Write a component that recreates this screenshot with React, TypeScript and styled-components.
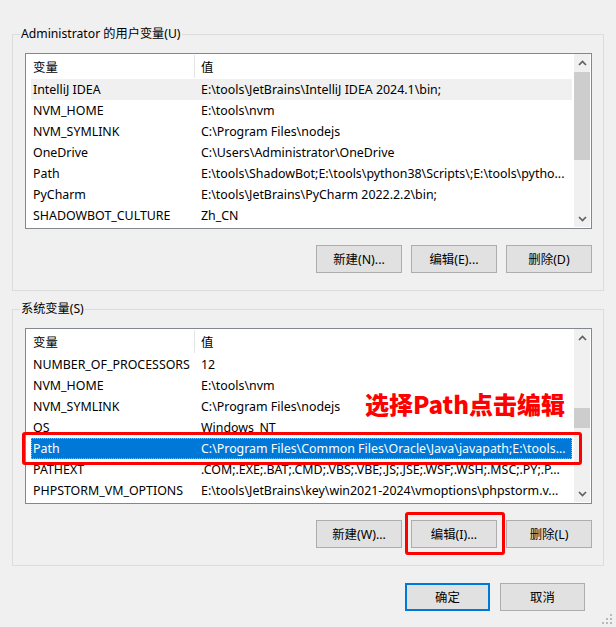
import React from 'react';
import styled, { createGlobalStyle, css } from 'styled-components';

const GlobalStyle = createGlobalStyle`
    html, body {
        margin: 0;
        padding: 0;
        background: #f0f0f0;
    }
    body {
        font-family: 'Noto Sans', 'Noto Sans CJK SC', sans-serif;
        font-size: 12px;
        color: #000;
    }
`;

const Window = styled.div`
    position: relative;
    width: 616px;
    height: 627px;
    box-sizing: border-box;
    padding: 26px 12px 0 12px;
    display: flex;
    flex-direction: column;
    overflow: hidden;
`;

const Group = styled.fieldset<{ $gap?: number }>`
    margin: ${(p) => p.$gap ?? 0}px 0 0 0;
    padding: 0;
    border: 1px solid #dcdcdc;
    min-width: 0;
`;

const Legend = styled.legend`
    margin-left: 7px;
    padding: 0 1px;
    line-height: 16px;
    font-size: 12.2px;
    color: #000;
`;

const GroupBody = styled.div`
    padding: 11px 11px 17px 12px;
    display: flex;
    flex-direction: column;
`;

const ListView = styled.div`
    position: relative;
    height: 176px;
    box-sizing: border-box;
    border: 1px solid #828790;
    background: #fff;
    display: flex;
    font-size: 12.4px;
`;

const ListContent = styled.div`
    flex: 1;
    padding-left: 5px;
    display: flex;
    flex-direction: column;
`;

const HeaderRow = styled.div`
    display: flex;
    height: 25px;
    align-items: center;
    margin-right: 1px;
`;

const HeaderCell = styled.div<{ $first?: boolean }>`
    height: 23px;
    display: flex;
    align-items: center;
    ${(p) =>
        p.$first
            ? css`
                  width: 164px;
                  box-sizing: border-box;
                  padding-left: 2px;
                  border-right: 1px solid #e5e5e5;
              `
            : css`
                  padding-left: 6px;
              `}
`;

type RowState = 'hover' | 'selected' | undefined;

const Row = styled.div<{ $state?: RowState; $marked?: boolean }>`
    position: relative;
    display: flex;
    align-items: center;
    height: 21px;
    margin-right: 1px;
    white-space: nowrap;
    ${(p) =>
        p.$state === 'hover' &&
        css`
            background: #f0f0f0;
        `}
    ${(p) =>
        p.$state === 'selected' &&
        css`
            background: #0078d7;
            color: #fff;
            outline: 1px dotted #f0a040;
            outline-offset: -1px;
        `}
    ${(p) =>
        p.$marked &&
        css`
            &::after {
                content: '';
                position: absolute;
                top: -6px;
                bottom: -6px;
                left: -9px;
                right: -10px;
                border: 3px solid #ff0000;
                border-radius: 3px;
                z-index: 3;
                pointer-events: none;
            }
        `}
`;

const NameCell = styled.div`
    width: 164px;
    box-sizing: border-box;
    padding-left: 2px;
    flex-shrink: 0;
`;

const ValueCell = styled.div`
    padding-left: 6px;
`;

const ScrollBar = styled.div`
    position: relative;
    width: 16px;
    margin: 0 1px 1px 1px;
    background: #f0f0f0;
    display: flex;
    flex-direction: column;
    justify-content: space-between;
`;

const ScrollArrow = styled.div`
    height: 17px;
    display: flex;
    align-items: center;
    justify-content: center;
`;

const Thumb = styled.div<{ $top: number; $height: number }>`
    position: absolute;
    left: 0;
    right: 0;
    top: ${(p) => p.$top}px;
    height: ${(p) => p.$height}px;
    background: #cdcdcd;
`;

const ButtonRow = styled.div<{ $pad?: number }>`
    display: flex;
    justify-content: flex-end;
    gap: 9px;
    margin-top: 16px;
    padding-right: ${(p) => p.$pad ?? 0}px;
`;

const Button = styled.button<{ $primary?: boolean; $marked?: boolean; $w?: number }>`
    position: relative;
    width: ${(p) => p.$w ?? 86}px;
    height: 28px;
    box-sizing: border-box;
    background: #e1e1e1;
    border: 1px solid #adadad;
    font-family: 'Noto Sans', 'Noto Sans CJK SC', sans-serif;
    font-size: 12.4px;
    color: #000;
    padding: 0;
    cursor: default;
    ${(p) =>
        p.$primary &&
        css`
            border: 2px solid #0078d7;
        `}
    ${(p) =>
        p.$marked &&
        css`
            &::after {
                content: '';
                position: absolute;
                top: -9px;
                bottom: -8px;
                left: -7px;
                right: -9px;
                border: 3px solid #ff0000;
                border-radius: 3px;
                pointer-events: none;
            }
        `}
`;

const Footer = styled.div`
    display: flex;
    justify-content: flex-end;
    gap: 10px;
    margin-top: 17px;
    padding-right: 19px;
`;

const Note = styled.div`
    position: absolute;
    left: 339px;
    top: 61px;
    font-family: 'Noto Sans CJK SC', sans-serif;
    font-size: 24px;
    line-height: 28px;
    font-weight: 900;
    color: #ff0000;
    white-space: nowrap;
    z-index: 4;
    text-shadow: 1px 0 #fff, -1px 0 #fff, 0 1px #fff, 0 -1px #fff;
`;

const Grip = styled.svg`
    position: absolute;
    right: 3px;
    bottom: 2px;
`;

const Chevron: React.FC<{ up?: boolean }> = ({ up }) => (
    <svg width="9" height="6" viewBox="0 0 9 6">
        <path
            d={up ? 'M1 5 L4.5 1.5 L8 5' : 'M1 1 L4.5 4.5 L8 1'}
            fill="none"
            stroke="#606060"
            strokeWidth="1.7"
        />
    </svg>
);

interface Variable {
    name: string;
    value: string;
    state?: RowState;
    marked?: boolean;
}

const userVars: Variable[] = [
    { name: 'IntelliJ IDEA', value: 'E:\\tools\\JetBrains\\IntelliJ IDEA 2024.1\\bin;', state: 'hover' },
    { name: 'NVM_HOME', value: 'E:\\tools\\nvm' },
    { name: 'NVM_SYMLINK', value: 'C:\\Program Files\\nodejs' },
    { name: 'OneDrive', value: 'C:\\Users\\Administrator\\OneDrive' },
    { name: 'Path', value: 'E:\\tools\\ShadowBot;E:\\tools\\python38\\Scripts\\;E:\\tools\\pytho...' },
    { name: 'PyCharm', value: 'E:\\tools\\JetBrains\\PyCharm 2022.2.2\\bin;' },
    { name: 'SHADOWBOT_CULTURE', value: 'Zh_CN' },
];

const systemVars: Variable[] = [
    { name: 'NUMBER_OF_PROCESSORS', value: '12' },
    { name: 'NVM_HOME', value: 'E:\\tools\\nvm' },
    { name: 'NVM_SYMLINK', value: 'C:\\Program Files\\nodejs' },
    { name: 'OS', value: 'Windows_NT' },
    {
        name: 'Path',
        value: 'C:\\Program Files\\Common Files\\Oracle\\Java\\javapath;E:\\tools...',
        state: 'selected',
        marked: true,
    },
    { name: 'PATHEXT', value: '.COM;.EXE;.BAT;.CMD;.VBS;.VBE;.JS;.JSE;.WSF;.WSH;.MSC;.PY;.P...' },
    { name: 'PHPSTORM_VM_OPTIONS', value: 'E:\\tools\\JetBrains\\key\\win2021-2024\\vmoptions\\phpstorm.v...' },
];

interface ListProps {
    rows: Variable[];
    thumbTop: number;
    thumbHeight: number;
    children?: React.ReactNode;
}

const VariableList: React.FC<ListProps> = ({ rows, thumbTop, thumbHeight, children }) => (
    <ListView>
        <ListContent>
            <HeaderRow>
                <HeaderCell $first>变量</HeaderCell>
                <HeaderCell>值</HeaderCell>
            </HeaderRow>
            {rows.map((r) => (
                <Row key={r.name} $state={r.state} $marked={r.marked}>
                    <NameCell>{r.name}</NameCell>
                    <ValueCell>{r.value}</ValueCell>
                </Row>
            ))}
        </ListContent>
        <ScrollBar>
            <ScrollArrow>
                <Chevron up />
            </ScrollArrow>
            <Thumb $top={thumbTop} $height={thumbHeight} />
            <ScrollArrow>
                <Chevron />
            </ScrollArrow>
        </ScrollBar>
        {children}
    </ListView>
);

const App: React.FC = () => {
    return (
        <>
            <GlobalStyle />
            <Window>
                <Group>
                    <Legend>Administrator 的用户变量(U)</Legend>
                    <GroupBody>
                        <VariableList rows={userVars} thumbTop={18} thumbHeight={88} />
                        <ButtonRow>
                            <Button>新建(N)...</Button>
                            <Button>编辑(E)...</Button>
                            <Button>删除(D)</Button>
                        </ButtonRow>
                    </GroupBody>
                </Group>
                <Group $gap={10}>
                    <Legend>系统变量(S)</Legend>
                    <GroupBody>
                        <VariableList rows={systemVars} thumbTop={79} thumbHeight={20}>
                            <Note>选择Path点击编辑</Note>
                        </VariableList>
                        <ButtonRow>
                            <Button>新建(W)...</Button>
                            <Button $marked>编辑(I)...</Button>
                            <Button>删除(L)</Button>
                        </ButtonRow>
                    </GroupBody>
                </Group>
                <Footer>
                    <Button $primary $w={85}>确定</Button>
                    <Button $w={85}>取消</Button>
                </Footer>
                <Grip width="12" height="12" viewBox="0 0 12 12">
                    <rect x="9" y="1" width="2" height="2" fill="#b9b9b9" />
                    <rect x="5" y="5" width="2" height="2" fill="#b9b9b9" />
                    <rect x="9" y="5" width="2" height="2" fill="#b9b9b9" />
                    <rect x="1" y="9" width="2" height="2" fill="#b9b9b9" />
                    <rect x="5" y="9" width="2" height="2" fill="#b9b9b9" />
                    <rect x="9" y="9" width="2" height="2" fill="#b9b9b9" />
                </Grip>
            </Window>
        </>
    );
};

export default App;
